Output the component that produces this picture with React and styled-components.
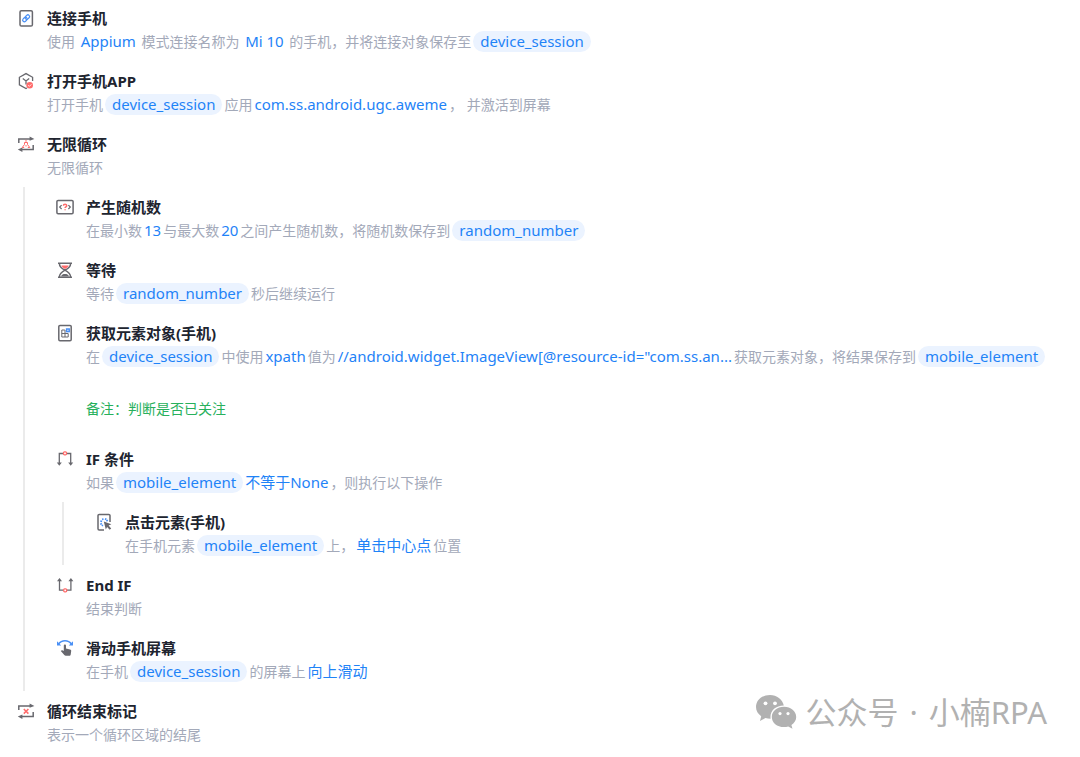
import React from "react";
import styled, { createGlobalStyle } from "styled-components";

const GlobalStyle = createGlobalStyle`
  * {
    box-sizing: border-box;
  }
  body {
    margin: 0;
    background: #fff;
    font-family: "Noto Sans", "Noto Sans CJK SC", sans-serif;
  }
`;

const DARK = "#68686e";
const RED = "#ff6b6b";
const BLUE = "#4a90f5";

const icons = {
  link: (
    <>
      <rect x="3" y="1.7" width="12.4" height="15.4" rx="1.4" stroke={DARK} />
      <g stroke={BLUE} strokeWidth="1.2" transform="rotate(-45 9.2 9.4)">
        <rect x="5" y="7.6" width="5" height="3.4" rx="1.7" />
        <rect x="8.4" y="7.6" width="5" height="3.4" rx="1.7" />
      </g>
    </>
  ),
  app: (
    <>
      <path d="M10 16 9 16.6 2.4 12.9V5.3L9 1.6l6.6 3.7V9" stroke={DARK} strokeWidth="1.3" />
      <path d="M5.8 6.6 9 9l3.2-2.4M9 9v3.4" stroke={DARK} strokeWidth="1.3" />
      <circle cx="12.7" cy="13.3" r="3.3" fill={RED} stroke="none" />
      <path d="m11.2 13.3 1.1 1.1 2-2" stroke="#fff" strokeWidth="0.9" />
    </>
  ),
  loop: (
    <>
      <path d="M1.8 8V4h12M16.2 10v4.5h-12" stroke={DARK} />
      <path d="m12.6 1.4 4.800 2.600-4.800 1.800zM5.400 17 .8 14.500l4.600-1.900z" fill={DARK} stroke="none" />
      <path
        d="M9 4.800v2M7.500 7.500h3M7.500 7.500v2l-2.300 3h2M10.500 7.500v2l2.300 3h-2M9 10v1.500"
        stroke={RED}
        strokeWidth="1"
      />
    </>
  ),
  loopEnd: (
    <>
      <path d="M1.8 8V4h12M16.2 10v4.5h-12" stroke={DARK} />
      <path d="m12.6 1.4 4.800 2.600-4.800 1.800zM5.400 17 .8 14.500l4.600-1.900z" fill={DARK} stroke="none" />
      <path d="m6.8 7 4.600 4.600m0-4.600-4.600 4.600" stroke={RED} />
    </>
  ),
  random: (
    <>
      <rect x="0.9" y="2.4" width="16.2" height="13.4" rx="1.2" stroke={DARK} />
      <path d="M5.6 7.2 3.7 9.1 5.6 11M12.4 7.2l1.9 1.9-1.9 1.9" stroke={DARK} strokeWidth="1.2" />
      <path d="M7.4 7.8c0-2 3.3-2 3.3 0 0 1.2-1.6 1-1.6 2.2M9.1 11.2v1" stroke={RED} />
    </>
  ),
  wait: (
    <>
      <path
        d="M2 2.2h14M2 16.2h14M3.4 2.4c0 3.6 2.6 5.2 5.6 6.8 3-1.6 5.6-3.2 5.6-6.8M3.4 16c0-3.6 2.6-5.2 5.6-6.8 3 1.6 5.6 3.2 5.6 6.8"
        stroke={DARK}
      />
      <path d="M5.4 4.6h7.2C12 6.4 10.6 7.2 9 8 7.4 7.2 6 6.4 5.4 4.6z" fill={RED} stroke="none" />
      <path d="M5 15.6c.6-2.2 2.2-2.6 4-2.6s3.4.4 4 2.6z" fill={DARK} stroke="none" />
    </>
  ),
  element: (
    <>
      <rect x="2.8" y="1.4" width="12.4" height="15.4" rx="1.2" stroke={DARK} />
      <path d="M8.8 6H5.8v7h6.4V9.6M5.8 9.5h6.4M9 6v7" stroke={DARK} strokeWidth="1" />
      <rect x="10.6" y="5" width="2.6" height="2.6" stroke={BLUE} />
    </>
  ),
  ifStart: (
    <>
      <path d="M3.3 13V3.5h4M10.8 3.5h3.9V13" stroke={DARK} strokeWidth="1.3" />
      <path d="M.8 12.4h5l-2.5 3.4zM12.2 12.4h5l-2.5 3.4z" fill={DARK} stroke="none" />
      <rect x="7.5" y="1.8" width="3" height="3" rx="1" stroke={RED} strokeWidth="1.3" />
    </>
  ),
  ifEnd: (
    <>
      <path d="M3.5 5v9.2h4M11 14.2h3.9V5" stroke={DARK} strokeWidth="1.3" />
      <path d="M1 5.3h5L3.5 1.9zM12.4 5.3h5l-2.5-3.4z" fill={DARK} stroke="none" />
      <rect x="7.7" y="12.8" width="3" height="3" rx="1" stroke={RED} strokeWidth="1.3" />
    </>
  ),
  click: (
    <>
      <path
        d="M9 17H4.2A1.2 1.2 0 0 1 3 15.800V2.600a1.200 1.200 0 0 1 1.200-1.200h9.600A1.200 1.200 0 0 1 15 2.600V9"
        stroke={DARK}
      />
      <path
        d="M7.6 5.4 8 7M11 5.2 10.4 7M5.3 8l1.8.5M5.2 11.2l1.8-.6M7 13l.8-1.200M12.800 7.200l-1.400 1"
        stroke={BLUE}
      />
      <path d="m8.8 8.6 7.6 2.6-2.8 1.4 2.6 2.8-1.5 1.4-2.6-2.8-1.3 2.6z" fill={DARK} stroke="none" />
    </>
  ),
  swipe: (
    <>
      <path d="M2.4 5.2C5.8.6 12.2.6 15.6 5.2" stroke={BLUE} />
      <path d="M1 2.2v4.4h4.2zM17 2.2v4.4h-4.2z" fill={BLUE} stroke="none" />
      <path
        d="M7.8 6.6c0-1.5 2.2-1.5 2.2 0v3l4 .8c.9.2 1.3.8 1.2 1.6l-.5 3.4c-.1.8-.6 1.4-1.4 1.4H9.8c-.6 0-1.1-.3-1.5-.8L4.8 12c.7-1 1.8-.9 3-.1z"
        fill={DARK}
        stroke="none"
      />
    </>
  ),
};

const steps = [
  {
    icon: "link",
    title: "连接手机",
    parts: [
      "使用 ",
      { value: "Appium" },
      " 模式连接名称为 ",
      { value: "Mi 10" },
      " 的手机，并将连接对象保存至",
      { variable: "device_session" },
    ],
  },
  {
    icon: "app",
    title: "打开手机APP",
    parts: [
      "打开手机",
      { variable: "device_session" },
      "应用",
      { value: "com.ss.android.ugc.aweme" },
      "， 并激活到屏幕",
    ],
  },
  {
    icon: "loop",
    title: "无限循环",
    parts: ["无限循环"],
    children: [
      {
        icon: "random",
        title: "产生随机数",
        parts: [
          "在最小数",
          { value: "13" },
          "与最大数",
          { value: "20" },
          "之间产生随机数，将随机数保存到",
          { variable: "random_number" },
        ],
      },
      {
        icon: "wait",
        title: "等待",
        parts: ["等待", { variable: "random_number" }, "秒后继续运行"],
      },
      {
        icon: "element",
        title: "获取元素对象(手机)",
        parts: [
          "在",
          { variable: "device_session" },
          "中使用",
          { value: "xpath" },
          "值为",
          { value: '//android.widget.ImageView[@resource-id="com.ss.an...' },
          "获取元素对象，将结果保存到",
          { variable: "mobile_element" },
        ],
      },
      { note: "备注：判断是否已关注" },
      {
        icon: "ifStart",
        title: "IF 条件",
        parts: [
          "如果",
          { variable: "mobile_element" },
          { value: "不等于None" },
          "，则执行以下操作",
        ],
        children: [
          {
            icon: "click",
            title: "点击元素(手机)",
            parts: [
              "在手机元素",
              { variable: "mobile_element" },
              "上，",
              { value: "单击中心点" },
              "位置",
            ],
          },
        ],
      },
      { icon: "ifEnd", title: "End IF", parts: ["结束判断"] },
      {
        icon: "swipe",
        title: "滑动手机屏幕",
        parts: [
          "在手机",
          { variable: "device_session" },
          "的屏幕上",
          { value: "向上滑动" },
        ],
      },
    ],
  },
  { icon: "loopEnd", title: "循环结束标记", parts: ["表示一个循环区域的结尾"] },
];

const Part = ({ part }) => {
  if (part.variable) return <Variable>{part.variable}</Variable>;
  if (part.value) return <Value>{part.value}</Value>;
  return <span>{part}</span>;
};

const Step = ({ step }) => {
  const { icon, title, parts, note, children } = step;

  if (note) {
    return (
      <li>
        <Note>{note}</Note>
      </li>
    );
  }

  return (
    <li>
      <Row>
        <Icon viewBox="0 0 18 18" aria-hidden="true">
          {icons[icon]}
        </Icon>
        <div>
          <Title>{title}</Title>
          <Description>
            {parts.map((part, index) => (
              <Part key={index} part={part} />
            ))}
          </Description>
        </div>
      </Row>
      {children && (
        <Branch>
          {children.map((child, index) => (
            <Step key={index} step={child} />
          ))}
        </Branch>
      )}
    </li>
  );
};

const App = () => {
  return (
    <Page>
      <GlobalStyle />
      <List>
        {steps.map((step, index) => (
          <Step key={index} step={step} />
        ))}
      </List>
      <Watermark>
        <svg width="42" height="36" viewBox="0 0 42 36" aria-hidden="true">
          <path
            d="M15 1C6.9 1 1 6.4 1 13c0 3.8 2 7 5.2 9.2L5 27l5.4-2.9c1.7.5 3.3.7 5.2.7C14.5 17.5 20 11.6 28.8 11.5 27.5 5.4 21.8 1 15 1z"
            fill="#b1b1b1"
          />
          <path
            d="M29 12.8c-7 0-12.2 4.5-12.2 10.1S22 33 29 33c1.5 0 2.9-.2 4.2-.6l4.300 2.300-1.100-3.700c2.800-1.900 4.800-4.700 4.800-8.100 0-5.600-5.300-10.100-12.200-10.100z"
            fill="#b1b1b1"
          />
          <g fill="#fff">
            <circle cx="10.5" cy="9.3" r="1.9" />
            <circle cx="20" cy="9.3" r="1.9" />
            <circle cx="25" cy="19.6" r="1.6" />
            <circle cx="33" cy="19.6" r="1.6" />
          </g>
        </svg>
        <Account>
          <span>公众号</span>
          <span>·</span>
          <span>小楠RPA</span>
        </Account>
      </Watermark>
    </Page>
  );
};

const Page = styled.main`
  position: relative;
  margin-top: -2px;
  padding-bottom: 6px;
`;

const List = styled.ul`
  margin: 0;
  padding: 0;
  list-style: none;
`;

const Branch = styled(List)`
  margin-left: 23px;
  padding-left: 14px;
  border-left: 2px solid #ebebeb;
`;

const Row = styled.div`
  display: flex;
  gap: 12px;
  padding: 8px 0 8px 17px;
`;

const Icon = styled.svg`
  flex: none;
  width: 18px;
  height: 18px;
  margin-top: 3px;
  fill: none;
  stroke-width: 1.5;
`;

const Title = styled.h3`
  margin: 0;
  font-size: 15px;
  line-height: 24px;
  font-weight: 700;
  color: #20242f;
`;

const Description = styled.p`
  display: flex;
  align-items: baseline;
  gap: 2px;
  height: 23px;
  margin: 0;
  font-size: 14px;
  line-height: 23px;
  white-space: pre;
  color: #a3a9b9;
`;

const Value = styled.span`
  font-size: 15px;
  color: #1f83f7;
`;

const Variable = styled.span`
  padding: 0 7px;
  border-radius: 11px;
  background: #ebf3ff;
  font-size: 15px;
  line-height: 21px;
  color: #1f83f7;
`;

const Note = styled.p`
  margin: 0;
  padding: 21px 0 18px 47px;
  font-size: 14px;
  line-height: 24px;
  color: #27b05c;
`;

const Watermark = styled.div`
  position: absolute;
  right: 33px;
  bottom: 26px;
  display: flex;
  align-items: center;
  gap: 8px;
  font-size: 31px;
  line-height: 44px;
  color: #b1b1b1;
`;

const Account = styled.div`
  display: flex;
  gap: 11px;
`;

export default App;
